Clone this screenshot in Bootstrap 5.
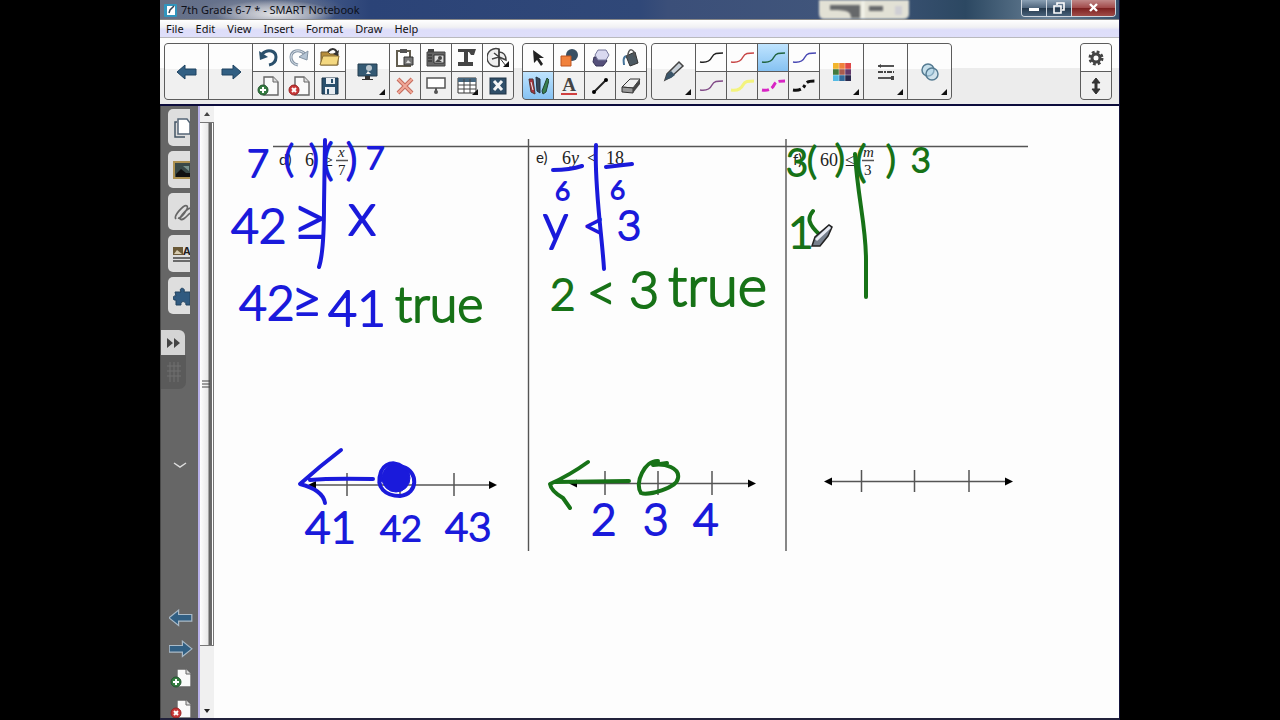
<!DOCTYPE html>
<html lang="en">
<head>
<meta charset="utf-8">
<meta name="viewport" content="width=device-width, initial-scale=1">
<title>7th Grade 6-7 * - SMART Notebook</title>
<link href="https://cdn.jsdelivr.net/npm/bootstrap@5.3.0/dist/css/bootstrap.min.css" rel="stylesheet">
<style>
body{background:#000;font-family:"Noto Sans","Open Sans",sans-serif;font-size:11px;line-height:16px;color:#111}
button{padding:0;border:0;background:none;color:inherit}
svg{display:block}
.app{width:75%;background:#fdfdfd;border-right:1px solid #14143c;border-bottom:2px solid #22223c}
.titlebar{height:20px;border-bottom:1px solid #888;background:
 radial-gradient(ellipse 60px 14px at 12% 75%,#e4e4e6 0,#b4b8c4cc 60%,#0000 100%),
 radial-gradient(ellipse 90px 18px at 10% 50%,#858d9e 0,#67728bcc 60%,#0000 100%),
 linear-gradient(90deg,#6a7285 0,#566a94 12%,#2b4377 22%,#304878 50%,#3b4f79 53%,#41567b 72%,#2c4862 84%,#6a8297 93%,#36506c 100%)}
.titlebar .caption{color:#0c0f18}
.blur-patch{width:90px;height:19px;margin-left:auto;margin-right:112px;filter:blur(1px)}
.winbtns{height:17px;border:1px solid #cfd6de;border-top:0;border-radius:0 0 4px 4px;overflow:hidden;margin-right:3px}
.winbtns button{width:25px;background:linear-gradient(#8aa0b4,#4e657c 50%,#24384b 52%,#48617a);border-right:1px solid #cfd6de;display:grid;place-items:center}
.winbtns button.x{width:43px;border:0;background:linear-gradient(#c08888,#a04848 50%,#7c2020 52%,#a04c48)}
.menubar{height:18px;background:linear-gradient(#fff 0,#f1f1f3 7px,#dedefa 10px,#dfdffa 100%);border-bottom:1px solid #b9b9bd;gap:12px;padding-left:6px}
.menubar a{color:#111;text-decoration:none;white-space:nowrap}
.toolbar{height:68px;padding:5px 7px 0 4px;background:linear-gradient(#fdfdfd 30px,#ececec 30px);border-bottom:2px solid #0c0c3c}
.tools{display:grid;grid-auto-flow:column;grid-template-rows:27px 27px;gap:1px;background:#5c5c5c;border:1px solid #5c5c5c;border-radius:4px;overflow:hidden}
.tools button{width:30px;background:#fdfdfd;display:grid;place-items:center;position:relative}
.tools button.big{grid-row:span 2;width:43px;background:linear-gradient(#fdfdfd 25px,#f0f0f0 25px)}
.tools button.low{background:#f0f0f0}
.tools button.on{background:linear-gradient(#bfe4ff,#86c2f2)}
.drop::after{content:"";position:absolute;right:4px;bottom:4px;border:3px solid #111;border-top-color:#0000;border-left-color:#0000}
.side{width:38px;background:#666;border-left:1px solid #484848;padding-top:3px;gap:5px}
.side .tab{width:22px;height:37px;margin-left:7px;background:#dedede;border-radius:5px 0 0 5px;display:grid;place-items:center end;flex:none}
.expander{width:24px;height:25px;background:#d4d4d4;border-radius:0 6px 0 0;display:grid;place-items:center;margin-top:11px;flex:none}
.grip{width:25px;height:34px;background:#5a5a5a;border-radius:0 0 7px 0;margin-top:-5px;display:grid;place-items:center;flex:none}
.scroller{width:16px;border-left:2px solid #b8b0e8;background:#f0f0f0}
.thumb{flex:1;border:1px solid #777;border-left:0;background:linear-gradient(90deg,#fff,#e8e8e8 8px,#666 9px,#6c6c6c 12px,#fff 12px);display:grid;place-items:center start;padding-left:2px}
.board svg{width:100%;height:auto}
.ink{font-family:Lato,sans-serif;font-weight:300;font-size:48px}
.ink path{fill:none;stroke-width:4;stroke-linecap:round;stroke-linejoin:round}
.blue{fill:#1a1adb;stroke:#1a1adb}.green{fill:#177217;stroke:#177217}
.ink text{stroke-width:2;stroke-linecap:round;stroke-linejoin:round}
.print{font-family:"Liberation Serif",serif;font-size:18px;fill:#222}
.print .item{font-family:Lato,sans-serif;font-size:15px}
.print .frac{font-size:15px}
</style>
</head>
<body>
<svg width="0" height="0" class="position-absolute" aria-hidden="true"><defs>
<path id="arr" d="M0 8 8 1v4h11v6H8v4z"/>
<g id="page"><path d="M8 2h9l5 5v13H8z" fill="#fafafa" stroke="#666" stroke-width="1.4"/><path d="M17 2v5h5" fill="#ddd" stroke="#666"/></g>
<g id="add"><use href="#page"/><circle cx="7" cy="15" r="5" fill="#347c40" stroke="#245630"/><path d="M4 15h6M7 12v6" stroke="#fff" stroke-width="2"/></g>
<g id="del"><use href="#page"/><circle cx="7" cy="15" r="5" fill="#c83838" stroke="#922"/><path d="m5 13 4 4m0-4-4 4" stroke="#fff" stroke-width="2"/></g>
<path id="wave" d="M1 14c6 1 10-1 12-5s5-4 11-4" fill="none"/>
</defs></svg>
<div class="app vh-100 mx-auto d-flex flex-column overflow-hidden">
 <header class="titlebar d-flex align-items-start flex-shrink-0">
  <svg class="m-1" width="13" height="13" viewBox="0 0 13 13"><rect width="13" height="13" rx="1" fill="#3295bd"/><path d="M3 2h8v9H3z" fill="#fff"/><path d="m5 9 1-3 4-4" stroke="#345" fill="none" stroke-width="1.5"/></svg>
  <span class="caption mt-1 text-nowrap lh-1">7th Grade 6-7 * - SMART Notebook</span>
  <svg class="blur-patch" viewBox="0 0 90 19"><path d="M0 0h90v14q0 5-6 5H5q-5 0-5-6z" fill="#e2e1d5"/><path d="M11 5h30v13h-9c0-7-4-8-21-8zM50 6h14v5H50z" fill="#66686a"/><path d="M44 1v18" stroke="#f4f4ea" stroke-width="3"/><rect x="76" y="6" width="7" height="9" fill="#cfcfd4"/></svg>
  <div class="winbtns d-flex">
   <button aria-label="Minimize"><svg width="12" height="10"><path d="M1 5h10v3H1z" fill="#fff"/></svg></button>
   <button aria-label="Restore"><svg width="12" height="12"><path d="M4 3V1h7v7H9M1 4h7v7H1z" fill="none" stroke="#fff" stroke-width="1.6"/></svg></button>
   <button class="x" aria-label="Close"><svg width="12" height="10"><path d="m2 1 7 7m0-7L2 8" stroke="#fff" stroke-width="2.4"/></svg></button>
  </div>
 </header>
 <nav class="menubar d-flex align-items-center flex-shrink-0"><a href="#">File</a><a href="#">Edit</a><a href="#">View</a><a href="#">Insert</a><a href="#">Format</a><a href="#">Draw</a><a href="#">Help</a></nav>
 <div class="toolbar d-flex align-items-start flex-shrink-0">
  <div class="tools me-2">
   <button class="big" aria-label="Previous page"><svg width="20" height="16"><use href="#arr" fill="#315f83" stroke="#1e4260"/></svg></button>
   <button class="big" aria-label="Next page"><svg width="20" height="16"><use href="#arr" fill="#315f83" stroke="#1e4260" transform="matrix(-1 0 0 1 20 0)"/></svg></button>
   <button aria-label="Undo"><svg width="22" height="22"><path d="M5 7c6-6 14-3 14 3 0 4-2 7-7 8" fill="none" stroke="#2b506c" stroke-width="3"/><path d="m2 4 1 9 8-3z" fill="#2b506c"/></svg></button>
   <button class="low" aria-label="Add page"><svg width="24" height="22"><use href="#add"/></svg></button>
   <button aria-label="Redo"><svg width="22" height="22"><path d="M17 7C11 1 3 4 3 10c0 4 2 7 7 8" fill="none" stroke="#8797a8" stroke-width="3"/><path d="M17 7C11 1 3 4 3 10c0 4 2 7 7 8" fill="none" stroke="#dce4ec"/><path d="m20 4-1 9-8-3z" fill="#b4c4d4" stroke="#8494a4"/></svg></button>
   <button class="low" aria-label="Delete page"><svg width="24" height="22"><use href="#del"/></svg></button>
   <button aria-label="Open"><svg width="22" height="22"><path d="M2 18V5h7l2 2h8v11z" fill="#b78e3c" stroke="#70582c"/><path d="M1 18 4 9h16l-2 9z" fill="#f4d880" stroke="#8c7238"/><path d="M9 5c4-5 8-3 9 1" fill="none" stroke="#333" stroke-width="2"/><path d="m20 3-1 6-5-2z" fill="#333"/></svg></button>
   <button class="low" aria-label="Save"><svg width="20" height="20"><path d="M2 2h16v16H2z" fill="#294f6c" stroke="#1c3448"/><path d="M6 2h9v6H6zM5 11h10v7H5z" fill="#e8edf2"/><path d="M12 3v4M8 13v5" stroke="#294f6c" stroke-width="2"/></svg></button>
   <button class="big drop" aria-label="Full screen"><svg width="22" height="20"><path d="M1 2h19v12H1z" fill="#345a74" stroke="#243c4e"/><path d="M8 14h5v3h3v1H5v-1h3z" fill="#333"/><path d="m9 12 2-3 3 3" fill="#eee"/><circle cx="12" cy="6" r="3" fill="#bcc8d0"/></svg></button>
   <button aria-label="Paste"><svg width="22" height="22"><path d="M3 4h13v15H3z" fill="#fff" stroke="#635e50" stroke-width="2"/><path d="M6 2h7v4H6z" fill="#555"/><path d="M10 10h9v8h-9z" fill="#777" stroke="#333"/><path d="m12 16 2-3 3 3" fill="#ddd"/></svg></button>
   <button class="low" aria-label="Delete"><svg width="20" height="20"><path d="m3 3 14 14M17 3 3 17" stroke="#c56b5c" stroke-width="4"/><path d="m3 3 14 14M17 3 3 17" stroke="#f1a898" stroke-width="2"/></svg></button>
   <button aria-label="Capture"><svg width="22" height="22"><path d="M2 5h18v14H2z" fill="#666" stroke="#444"/><path d="M3 2h6v3H3z" fill="#444"/><path d="M9 8h10v8H9z" fill="#ddd" stroke="#333"/><path d="m10 15 3-3 4 3" fill="#444"/><circle cx="15" cy="11" r="2" fill="#444"/><path d="M3 8h4M3 11h4M3 14h4" stroke="#222"/></svg></button>
   <button class="low" aria-label="Screen shade"><svg width="22" height="22"><path d="M2 3h18v10H2z" fill="#fff" stroke="#555" stroke-width="1.5"/><path d="M11 13v4" stroke="#555" stroke-width="2"/><circle cx="11" cy="17" r="2" fill="#555"/></svg></button>
   <button aria-label="Document camera"><svg width="22" height="22"><path d="M2 2h18l-2 6h-3l-2-3H2zM8 5h4v10h5v4H2v-4h6z" fill="#444"/></svg></button>
   <button class="low drop" aria-label="Table"><svg width="20" height="20"><path d="M1 2h18v15H1z" fill="#fff" stroke="#333"/><path d="M1 2h18v4H1z" fill="#46667e"/><path d="M1 9h18M1 13h18M7 3v14M13 3v14" stroke="#444"/></svg></button>
   <button class="drop" aria-label="Measurement tools"><svg width="22" height="22"><path d="M12 2a9 9 0 1 0 0 17zM7 6l5 4-7 2M12 5c5 0 7 4 7 8l-7-3" fill="#eee" stroke="#444" stroke-width="1.5"/><path d="m12 10 7 9M12 2v17" stroke="#333"/></svg></button>
   <button class="low" aria-label="Add-ons"><svg width="20" height="20"><rect x="2" y="2" width="16" height="16" fill="#304f69" stroke="#203446"/><path d="m6 5 8 9m0-9-8 9" stroke="#f4f4f4" stroke-width="3"/></svg></button>
  </div>
  <div class="tools me-1">
   <button aria-label="Select"><svg width="20" height="20"><path d="m5 2 1 13 3-3 4 6 2-2-4-6h5z" fill="#222"/></svg></button>
   <button class="on" aria-label="Pens"><svg width="22" height="22"><path d="m2 4 2 13 4 2L6 4z" fill="#a43540" stroke="#533"/><path d="m9 2 1 14 3 2V4z" fill="#384858" stroke="#234"/><path d="m20 3-5 13 1 3 3-2 3-12z" fill="#388050" stroke="#243"/><path d="m4 7 2 8" stroke="#eee"/></svg></button>
   <button aria-label="Shapes"><svg width="20" height="20"><circle cx="13" cy="7" r="6" fill="#385064"/><path d="M2 8h10v10H2z" fill="#f1813b" stroke="#bd5520"/></svg></button>
   <button class="low" aria-label="Text"><svg width="20" height="22"><text x="10" y="16" text-anchor="middle" font-family="Liberation Serif" font-weight="bold" font-size="19" fill="#444">A</text><path d="M2 19h16" stroke="#d04040" stroke-width="2"/></svg></button>
   <button aria-label="Regular polygons"><svg width="20" height="20"><path d="m4 9 10 0 3 4-4 5H6l-3-4z" fill="#55507a" stroke="#383558"/><path d="m8 2 8 0 3 5-3 5H8L5 7z" fill="#d9d9f0" stroke="#77799c"/></svg></button>
   <button class="low" aria-label="Line"><svg width="20" height="20"><path d="M4 16 16 4" stroke="#222" stroke-width="2"/><circle cx="4" cy="16" r="2"/><circle cx="16" cy="4" r="2"/></svg></button>
   <button aria-label="Fill"><svg width="20" height="20"><path d="m5 8 9-4 3 11-8 3z" fill="#4c5962" stroke="#333"/><path d="M7 9c-1-10 8-9 6 0" fill="none" stroke="#555" stroke-width="1.5"/><path d="M5 8c-4 2-2 6-2 9" stroke="#46749a" stroke-width="2" fill="none"/></svg></button>
   <button class="low" aria-label="Eraser"><svg width="22" height="20"><path d="m2 11 8-8h10l-7 9z" fill="#eee" stroke="#333"/><path d="m2 11 11 1v5l-11-1z" fill="#999" stroke="#333"/><path d="m13 12 7-9v5l-7 9z" fill="#444"/></svg></button>
  </div>
  <div class="tools">
   <button class="big drop" aria-label="Pen type"><svg width="22" height="24"><path d="m2 20 2-6L16 2l4 4L8 17z" fill="#c8d0d8" stroke="#444" stroke-width="1.5"/><path d="m2 20 2-6 4-3 4 4-4 3z" fill="#3a5468"/></svg></button>
   <button aria-label="Black pen"><svg width="25" height="20"><use href="#wave" stroke="#222" stroke-width="1.5"/></svg></button>
   <button class="low" aria-label="Purple pen"><svg width="25" height="20"><use href="#wave" stroke="#824c88" stroke-width="1.5"/></svg></button>
   <button aria-label="Red pen"><svg width="25" height="20"><use href="#wave" stroke="#c84848" stroke-width="1.5"/></svg></button>
   <button class="low" aria-label="Yellow highlighter"><svg width="25" height="20"><use href="#wave" stroke="#f3f37d" stroke-width="3"/></svg></button>
   <button class="on" aria-label="Green pen"><svg width="25" height="20"><use href="#wave" stroke="#226542" stroke-width="1.5"/></svg></button>
   <button class="low" aria-label="Magenta dashed pen"><svg width="25" height="20"><use href="#wave" stroke="#d825c4" stroke-width="3" stroke-dasharray="7 3"/></svg></button>
   <button aria-label="Blue pen"><svg width="25" height="20"><use href="#wave" stroke="#4949b4" stroke-width="1.5"/></svg></button>
   <button class="low" aria-label="Black dashed pen"><svg width="25" height="20"><use href="#wave" stroke="#111" stroke-width="3" stroke-dasharray="8 3 3 3"/></svg></button>
   <button class="big drop" aria-label="Colour"><svg width="18" height="18"><path fill="#f2b52d" d="M0 0h6v6H0z"/><path fill="#f0823c" d="M6 0h6v6H6z"/><path fill="#df4747" d="M12 0h6v6h-6z"/><path fill="#447a3e" d="M0 6h6v6H0z"/><path fill="#a95c4e" d="M6 6h6v6H6z"/><path fill="#633a6c" d="M12 6h6v6h-6z"/><path fill="#54bbe5" d="M0 12h6v6H0z"/><path fill="#346b9a" d="M6 12h6v6H6z"/><path fill="#29294c" d="M12 12h6v6h-6z"/><path d="M6 0v18M12 0v18M0 6h18M0 12h18" stroke="#fff6"/></svg></button>
   <button class="big drop" aria-label="Line style"><svg width="18" height="18"><path d="M1 3h16M1 15h16" stroke="#555" stroke-width="2"/><path d="M1 9h16" stroke="#444" stroke-width="2" stroke-dasharray="5 1 2 1"/><path d="M1 3l3-2v4zM14 13h3v4h-3z" fill="#444"/></svg></button>
   <button class="big drop" aria-label="Transparency"><svg width="20" height="20"><circle cx="8" cy="8" r="6" fill="#c6dfeb" stroke="#557b92" stroke-width="1.5"/><circle cx="12" cy="12" r="6" fill="#b4d6e888" stroke="#557b92" stroke-width="1.5"/></svg></button>
  </div>
  <div class="tools ms-auto">
   <button aria-label="Settings"><svg width="18" height="18"><circle cx="9" cy="9" r="6" fill="none" stroke="#444" stroke-width="3" stroke-dasharray="2.7 2"/><circle cx="9" cy="9" r="4" fill="none" stroke="#444" stroke-width="3"/></svg></button>
   <button class="low" aria-label="Move toolbar"><svg width="14" height="18"><path d="m7 1 4 5H8v6h3l-4 5-4-5h3V6H3z" fill="#333" stroke="#333"/></svg></button>
  </div>
 </div>
 <main class="d-flex flex-grow-1 overflow-hidden">
  <aside class="side d-flex flex-column flex-shrink-0">
   <button class="tab" aria-label="Page sorter"><svg width="17" height="22"><path d="M4 5H2v15h10" fill="#ddd" stroke="#456" stroke-width="1.5"/><path d="M5 2h9l3 4v11H5z" fill="#fff" stroke="#567" stroke-width="1.5"/></svg></button>
   <button class="tab" aria-label="Gallery"><svg width="17" height="20"><path d="M1 2h18v16H1z" fill="#394947" stroke="#ad9151" stroke-width="2"/><path d="m3 14 5-5 5 4h4v4H3z" fill="#111"/><path d="M10 6h6v5" fill="#78938d"/></svg></button>
   <button class="tab" aria-label="Attachments"><svg width="17" height="22"><path d="M3 18c-3-3 8-15 11-13 2 2-6 13-9 12M8 18c-4 1 5-10 9-11M7 18c3 2 6-2 10-6" fill="none" stroke="#666" stroke-width="1.7"/></svg></button>
   <button class="tab" aria-label="Properties"><svg width="17" height="20"><path d="M0 3h10v8H0z" fill="#6b5a38"/><path d="m1 10 3-4 5 4" fill="#d8ccb0"/><text x="10" y="11" font-size="11" font-weight="bold" fill="#222">A</text><path d="M0 14h17M0 17h17" stroke="#444" stroke-width="1.5"/></svg></button>
   <button class="tab" aria-label="Add-ons panel"><svg width="17" height="20"><path d="M2 6h6C5 1 13 1 11 6h6v13h-4c0-5-6-4-5 0H3v-5c-4 1-4-5 0-4z" fill="#305a80" stroke="#23435f"/></svg></button>
   <button class="expander" aria-label="Expand"><svg width="15" height="12"><path d="m1 1 6 5-6 5zM8 1l6 5-6 5z" fill="#444"/></svg></button>
   <div class="grip"><svg width="16" height="20"><path d="M4 0v20M8 0v20M12 0v20M1 4h14M1 9h14M1 14h14" stroke="#707070"/></svg></div>
   <svg class="my-auto mx-auto" width="14" height="8"><path d="m1 2 6 4 6-4" fill="none" stroke="#ddd" stroke-width="1.5"/></svg>
   <button class="ms-1 ps-1 mt-auto mb-2" aria-label="Back"><svg width="24" height="18"><use href="#arr" fill="#315f83" stroke="#a9bac8" transform="matrix(1.2 0 0 1.1 0 0)"/></svg></button>
   <button class="ms-1 ps-1 mb-1" aria-label="Forward"><svg width="24" height="18"><use href="#arr" fill="#315f83" stroke="#a9bac8" transform="matrix(-1.2 0 0 1.1 23 0)"/></svg></button>
   <button class="ms-1 ps-1 mb-1" aria-label="Add"><svg width="24" height="22"><use href="#add"/></svg></button>
   <button class="ms-1 ps-1" aria-label="Remove"><svg width="24" height="20"><use href="#del"/></svg></button>
  </aside>
  <div class="scroller d-flex flex-column flex-shrink-0">
   <svg class="flex-shrink-0" width="14" height="16"><path d="m4 10 3-4 3 4z" fill="#444"/></svg>
   <div class="thumb"><svg width="8" height="8"><path d="M0 1h8M0 4h8M0 7h8" stroke="#444"/></svg></div>
   <svg class="mt-5 flex-shrink-0" width="14" height="24"><path d="m4 15 3 4 3-4z" fill="#222"/></svg>
  </div>
  <section class="board flex-grow-1" aria-label="Notebook page">
   <svg viewBox="214 106 905 612">
    <g stroke="#555" fill="none"><path stroke-width="1.4" d="M273 146.500H1028M528.500 139V551M786 139V551"/>
     <path stroke-width="1.5" d="M312 485H494M347 473v23M400 473v23M454 473v23M572 483.500H753M605 471v24M658 471v24M712 471v24M827 481.500h182M861.500 470v22M914.500 470v22M969 470v22M336 160.500h12M862 160.500h12"/></g>
    <path d="m308 485 8-4v8zM497 485l-8-4v8zM569 483.500l8-4v8zM756 483.500l-8-4v8zM824 481.500l8-4v8zM1013 481.500l-8-4v8z"/>
    <g class="print"><text class="item" x="279" y="165">d)</text><text x="305" y="166">6</text><text x="323" y="166">≥</text><text class="frac" x="338" y="157" font-style="italic">x</text><text class="frac" x="338" y="175">7</text>
     <text class="item" x="536" y="163">e)</text><text x="562" y="164">6<tspan font-style="italic">y</tspan></text><text x="587" y="164">&lt;</text><text x="606" y="164">18</text>
     <text class="item" x="793" y="165">f)</text><text x="820" y="166">60</text><text x="845" y="166">≤</text><text class="frac" x="863" y="157" font-style="italic">m</text><text class="frac" x="864" y="175">3</text></g>
    <g class="ink blue">
     <g font-size="38"><text x="247" y="177">7</text><text x="284" y="172">(</text><text x="309" y="172">)</text></g>
     <g font-size="44"><text x="322" y="175">(</text><text x="346" y="175">)</text></g>
     <text x="366" y="169" font-size="32">7</text>
     <text x="231" y="243">42</text><text x="293" y="240" font-size="62">≥</text><text x="348" y="235" font-size="60">x</text>
     <text x="239" y="320">42</text><text x="292" y="317" font-size="52">≥</text><text x="328" y="326" font-size="50">41</text>
     <path d="M325 140 324 205C324 235 323 255 319 267M553 170Q570 170 582 166M606 167l26-3M596 145C594 185 602 235 604 269"/>
     <text x="555" y="200" font-size="26">6</text><text x="610" y="199" font-size="26">6</text>
     <text x="543" y="240" font-size="50">y</text><text x="583" y="239" font-size="38">&lt;</text><text x="617" y="240" font-size="42">3</text>
     <path d="M341 450Q320 466 300 484Q323 490 325 503M310 480Q330 478 373 479"/>
     <circle cx="396" cy="478" r="14"/><path d="M381 472C375 488 386 496 400 496C419 494 418 471 403 467C392 458 377 467 381 480"/>
     <text x="305" y="543" font-size="44">41</text><text x="380" y="541" font-size="36">42</text><text x="445" y="541" font-size="40">43</text>
     <g font-size="44"><text x="591" y="535">2</text><text x="643" y="535">3</text><text x="693" y="535">4</text></g>
    </g>
    <g class="ink green">
     <text x="395" y="322" font-size="50">true</text>
     <text x="550" y="310" font-size="44">2</text><text x="587" y="310" font-size="50">&lt;</text><text x="629" y="308" font-size="52">3</text><text x="668" y="306" font-size="56">true</text>
     <g font-size="38"><text x="786" y="176">3</text><text x="807" y="174">(</text><text x="835" y="172">)</text><text x="886" y="173">)</text><text x="911" y="172" font-size="34">3</text></g>
     <text x="855" y="177" font-size="44">(</text><text x="788" y="248" font-size="44">1</text>
     <path d="M855 154C858 200 866 225 866 260V297M813 211C807 218 808 224 820 235"/>
     <path d="M588 462Q570 475 550 484Q551 491 563 498L570 508M555 482 629 481M658 461C645 460 634 483 641 493C648 496 677 488 678 478C680 468 665 463 653 465L667 463"/>
    </g>
    <path d="m812 246 3-9 14-12 3 2-4 9-8 10z" fill="#77808d" stroke="#222" stroke-width="1.5"/><path d="m816 240 14-13" stroke="#e8ebf4" stroke-width="3"/>
   </svg>
  </section>
 </main>
</div>
<script src="https://cdn.jsdelivr.net/npm/bootstrap@5.3.0/dist/js/bootstrap.bundle.min.js"></script>
</body>
</html>
